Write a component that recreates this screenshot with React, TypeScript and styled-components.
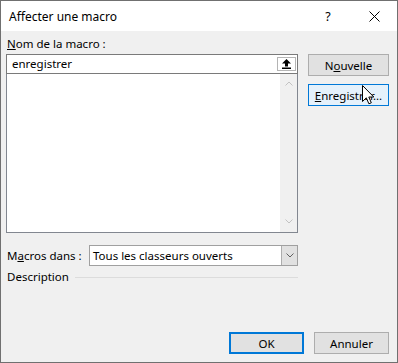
import React from 'react';
import styled, { createGlobalStyle } from 'styled-components';

const GlobalStyle = createGlobalStyle`
  html, body {
    margin: 0;
    padding: 0;
    background: #ffffff;
  }
  body {
    width: 398px;
    height: 363px;
    overflow: hidden;
  }
`;

const Window = styled.div`
  position: relative;
  width: 398px;
  height: 363px;
  box-sizing: border-box;
  border: 1px solid #707070;
  background: #f0f0f0;
  display: flex;
  flex-direction: column;
  font-family: 'Noto Sans', 'Open Sans', sans-serif;
  font-size: 11.5px;
  color: #000;
  user-select: none;
`;

const TitleBar = styled.div`
  height: 30px;
  background: #ffffff;
  display: flex;
  align-items: center;
  padding-left: 8px;
`;

const Title = styled.div`
  flex: 1;
  font-size: 12px;
`;

const TitleButton = styled.div`
  width: 46px;
  height: 30px;
  display: flex;
  align-items: center;
  justify-content: center;
  font-size: 12.5px;
`;

const Body = styled.div`
  flex: 1;
  display: flex;
  flex-direction: column;
  padding: 4px 8px 8px 5px;
`;

const Main = styled.div`
  display: flex;
  gap: 10px;
`;

const LeftCol = styled.div`
  width: 292px;
  display: flex;
  flex-direction: column;
`;

const RightCol = styled.div`
  width: 81px;
  padding-top: 19px;
  display: flex;
  flex-direction: column;
  gap: 8px;
`;

const FieldLabel = styled.div<{ $width?: number }>`
  height: 18px;
  line-height: 18px;
  padding-left: 1px;
  white-space: nowrap;
  ${({ $width }) => ($width ? `width: ${$width}px; flex: none;` : '')}
`;

const NameBox = styled.div`
  margin-top: 1px;
  height: 20px;
  box-sizing: border-box;
  border: 1px solid #7a7a7a;
  background: #ffffff;
  display: flex;
  align-items: center;
  padding-left: 5px;
`;

const NameText = styled.div`
  flex: 1;
  line-height: 18px;
`;

const ArrowButton = styled.div`
  width: 19px;
  height: 14px;
  box-sizing: border-box;
  border: 1px solid #b4b4b4;
  background: #ffffff;
  margin-right: 1px;
  display: flex;
  align-items: center;
  justify-content: center;
`;

const ListBox = styled.div`
  height: 159px;
  box-sizing: border-box;
  border: 1px solid #828790;
  border-top: none;
  background: #ffffff;
  display: flex;
`;

const ListArea = styled.div`
  flex: 1;
`;

const ScrollBar = styled.div`
  width: 17px;
  background: #f0f0f0;
  display: flex;
  flex-direction: column;
  justify-content: space-between;
  align-items: center;
  padding: 7px 0 8px;
`;

const ComboRow = styled.div`
  margin-top: 12px;
  display: flex;
  align-items: center;
`;

const ComboBox = styled.div`
  width: 209px;
  height: 21px;
  box-sizing: border-box;
  border: 1px solid #a0a0a0;
  background: #ffffff;
  display: flex;
`;

const ComboText = styled.div`
  flex: 1;
  padding-left: 3px;
  line-height: 19px;
`;

const ComboArrow = styled.div`
  width: 16px;
  box-sizing: border-box;
  border-left: 1px solid #adadad;
  background: #e1e1e1;
  display: flex;
  align-items: center;
  justify-content: center;
`;

const DescriptionRow = styled.div`
  margin-top: 2px;
  display: flex;
  align-items: center;
  gap: 6px;
`;

const Rule = styled.div`
  flex: 1;
  height: 1px;
  background: #dcdcdc;
`;

const Footer = styled.div`
  margin-top: auto;
  display: flex;
  justify-content: flex-end;
  gap: 10px;
`;

const DialogButton = styled.div<{ $variant?: 'normal' | 'hover' | 'default'; $width: number }>`
  width: ${({ $width }) => $width}px;
  height: 22px;
  box-sizing: border-box;
  display: flex;
  align-items: center;
  justify-content: center;
  white-space: nowrap;
  background: ${({ $variant }) => ($variant === 'hover' ? '#e5f1fb' : '#e1e1e1')};
  border: ${({ $variant }) =>
    $variant === 'hover'
      ? '1px solid #0078d7'
      : $variant === 'default'
      ? '2px solid #0078d7'
      : '1px solid #adadad'};
`;

const Cursor = styled.svg`
  position: absolute;
  left: 361px;
  top: 84px;
`;

const Chevron = ({ up, color }: { up?: boolean; color: string }) => (
  <svg width="8" height="5" viewBox="0 0 8 5">
    <polyline
      points={up ? '0.5,4.5 4,1 7.5,4.5' : '0.5,0.5 4,4 7.5,0.5'}
      fill="none"
      stroke={color}
      strokeWidth="1"
    />
  </svg>
);

export default function App() {
  return (
    <>
      <GlobalStyle />
      <Window>
        <TitleBar>
          <Title>Affecter une macro</Title>
          <TitleButton>?</TitleButton>
          <TitleButton>
            <svg width="11" height="11" viewBox="0 0 11 11">
              <path d="M0.5 0.5 L10.5 10.5 M10.5 0.5 L0.5 10.5" stroke="#000" strokeWidth="1" />
            </svg>
          </TitleButton>
        </TitleBar>
        <Body>
          <Main>
            <LeftCol>
              <FieldLabel>
                <u>N</u>om de la macro :
              </FieldLabel>
              <NameBox>
                <NameText>enregistrer</NameText>
                <ArrowButton>
                  <svg width="9" height="10" viewBox="0 0 9 10">
                    <polygon points="4.5,0 9,4.5 6,4.5 6,7.5 3,7.5 3,4.5 0,4.5" fill="#000" />
                    <rect x="0" y="8.5" width="9" height="1.5" fill="#000" />
                  </svg>
                </ArrowButton>
              </NameBox>
              <ListBox>
                <ListArea />
                <ScrollBar>
                  <Chevron up color="#c2c2c2" />
                  <Chevron color="#c2c2c2" />
                </ScrollBar>
              </ListBox>
              <ComboRow>
                <FieldLabel $width={82}>
                  M<u>a</u>cros dans :
                </FieldLabel>
                <ComboBox>
                  <ComboText>Tous les classeurs ouverts</ComboText>
                  <ComboArrow>
                    <Chevron color="#606060" />
                  </ComboArrow>
                </ComboBox>
              </ComboRow>
              <DescriptionRow>
                <FieldLabel>Description</FieldLabel>
                <Rule />
              </DescriptionRow>
            </LeftCol>
            <RightCol>
              <DialogButton $width={81}>
                N<u>o</u>uvelle
              </DialogButton>
              <DialogButton $width={81} $variant="hover">
                <u>E</u>nregistrer...
              </DialogButton>
            </RightCol>
          </Main>
          <Footer>
            <DialogButton $width={75} $variant="default">
              OK
            </DialogButton>
            <DialogButton $width={75}>Annuler</DialogButton>
          </Footer>
        </Body>
        <Cursor width="13" height="20" viewBox="0 0 13 20">
          <path
            d="M0.5 0.5 L0.5 16.5 L4.3 12.8 L6.9 18.8 L9.3 17.8 L6.8 12 L11.8 12 Z"
            fill="#ffffff"
            stroke="#000000"
            strokeWidth="1"
            strokeLinejoin="miter"
          />
        </Cursor>
      </Window>
    </>
  );
}
